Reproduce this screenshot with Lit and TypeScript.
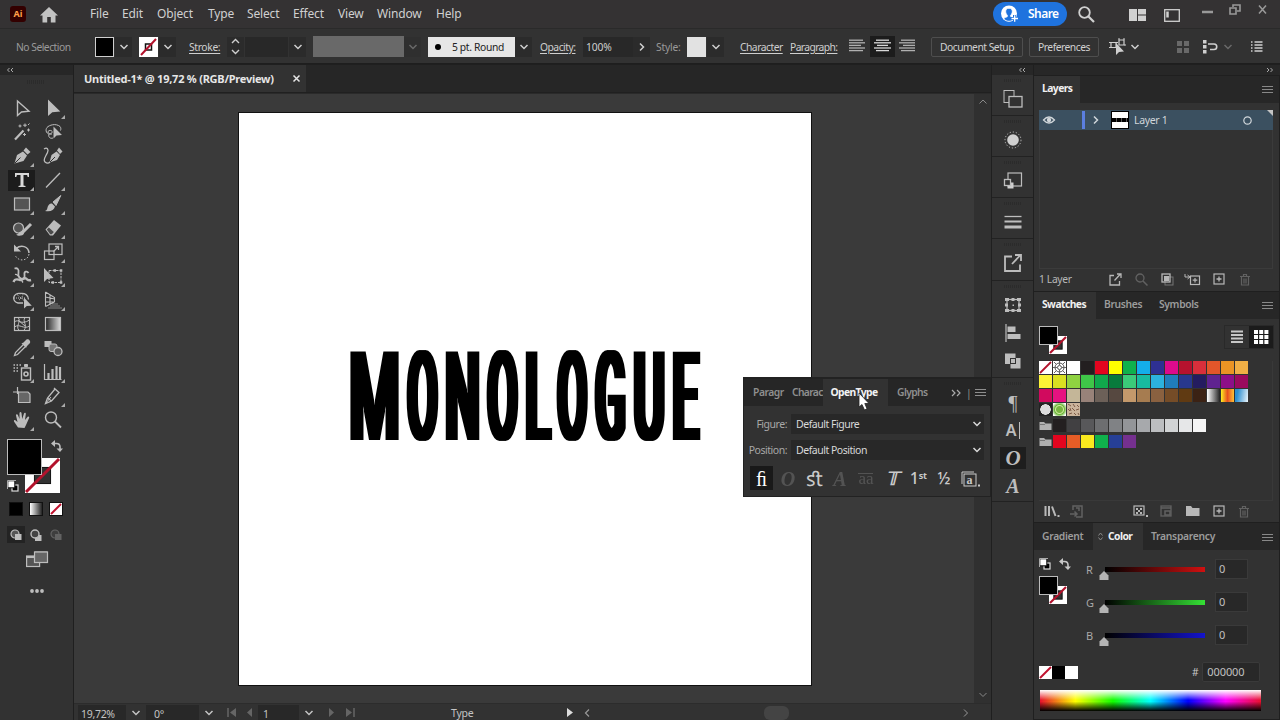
import { LitElement, html, svg, css } from "lit";
import { customElement } from "lit/decorators.js";

const ic = (w: number, h: number, body: unknown) =>
  html`<svg width=${w} height=${h} viewBox="0 0 ${w} ${h}" fill="none" stroke="currentColor">${body}</svg>`;

const chevDown = () => ic(10, 8, svg`<path d="M1.500 2l3.500 3.500L8.500 2" stroke-width="1.500"/>`);
const chevRight = () => ic(8, 10, svg`<path d="M2 1.500l3.500 3.500L2 8.500" stroke-width="1.500"/>`);
const chevLeft = () => ic(8, 10, svg`<path d="M6 1.500L2.500 5L6 8.500" stroke="#999" stroke-width="1.200"/>`);
const dblLeft = () => ic(8, 6, svg`<path d="M3.500 1L1.500 3l2 2M7 1L5 3l2 2"/>`);
const dblRight = () => ic(8, 6, svg`<path d="M1 1l2 2l-2 2M4.500 1l2 2l-2 2"/>`);
const burger = () => ic(11, 9, svg`<path d="M0 1.500h11M0 4.500h11M0 7.500h11"/>`);

const F = "currentColor";

const tools: [unknown, boolean, boolean?][] = [
  [svg`<path d="M5.500 3v14.500l4-3.500l7.500-.8z" stroke-width="1.400"/>`, false],
  [svg`<path d="M5 1.500v16.500l4.300-3.800l8-.8z" fill=${F} stroke="none"/>`, true],
  [svg`<path d="M3 17.500L11.500 8.500" stroke-width="2.200"/><path d="M13 1.500v3.500M11.200 3.200h3.600M16.500 6.500v3M15 8h3M8 2.500v3M6.500 4h3M12.500 11v3M11 12.500h3M16 3l1.500-1.500"/>`, false],
  [svg`<path d="M9 12C3 13 2 8 4 5.500S13 1 17 4.500c1 1 1 3 .5 4M5 9.500c1.500-2 5-1 4 1S5 12 5 9.500M6 12c-1 3 1 5 4 4"/><path d="M10.500 4.500v12l3-3l5.500-.5z" fill=${F} stroke="none"/>`, false],
  [svg`<path d="M2.500 17.500L5 9l6-3.500l4 4L11.500 15z" fill=${F} stroke="none"/><path d="M11.500 4.500l2.500-3l4.500 4.500l-3 2.500z" fill=${F} stroke="none"/><path d="M3 17l5.500-5.500" stroke="#323232"/>`, true],
  [svg`<path d="M6.500 16.500L8.500 9l5-3.500l3.500 3.500l-3 5z" fill=${F} stroke="none"/><path d="M14 4.500l2-3l3.500 4l-2.500 2.500z" fill=${F} stroke="none"/><path d="M7 16l5-5" stroke="#323232"/><path d="M1 3c3-2 5 0 3.500 3.500S-.5 14 2 16s4 1 5 0" stroke-width="1.300"/>`, false],
  [svg`<path d="M3 3h14v4h-1.300l-.6-2h-3.600v10.500l2 .5v1H6.500v-1l2-.5V5H4.900l-.6 2H3z" fill=${F} stroke="none"/>`, true, true],
  [svg`<path d="M3 17.500L17 3" stroke-width="1.300"/>`, true],
  [svg`<rect x="2.500" y="4" width="15" height="12" fill="#555" stroke-width="1.200"/>`, true],
  [svg`<path d="M17.800 1.500L10 8l3 3.500z" fill=${F}/><path d="M9 9.500l3 3c-1 4-4.500 5.500-10 4.500c2.500-1 2-2.500 2.800-4.500C5.800 10 7.500 9.500 9 9.500z" fill=${F} stroke="none"/>`, true],
  [svg`<circle cx="6.500" cy="10" r="5" fill="#555" stroke-width="1.200"/><path d="M19 6L9.500 15.500" stroke-width="3"/><path d="M10 13.500c-3-.5-3 3-6 3c2 2 7 1.500 8-1z" fill=${F} stroke="none"/>`, true],
  [svg`<path d="M2.500 11.500L11 2l7 5.500l-8 10H7z" fill=${F} stroke="none"/><path d="M3.800 11.500l2-2l5 4.500l-2 2.300H7.200z" fill="#4a4a4a" stroke="none"/>`, true],
  [svg`<path d="M4 6.500C9 2.500 16.500 4 17 11" stroke-width="1.500"/><path d="M2 2.500v7h7z" fill=${F} stroke="none"/><path d="M17 12c-1 7-10 8-13.500 2" stroke-dasharray="1.500 1.700"/>`, true],
  [svg`<rect x="1.500" y="9" width="9.500" height="8.500" stroke-width="1.200"/><rect x="6" y="2" width="13" height="10.500" stroke-width="1.200"/><path d="M10.500 9.500l4.500-4.500M12 4.500h3.500V8" stroke-width="1.300"/>`, true],
  [svg`<path d="M2.500 2.500c3-1 4.500 1 4 4s0 5 2.500 6s4-1 3.500-4s2.500-4 4-1.500" stroke-width="1.800"/><path d="M1.500 16c1.500-4 4-2.500 6.500-2s4-3 6-1.500s2 2.500 5 1.500" stroke-width="2.400"/><path d="M3 8.500c3-1 5 4 8 8" stroke-width="1.300"/>`, true],
  [svg`<rect x="6" y="4.500" width="12" height="12" stroke-dasharray="2.500 1"/><path d="M1 2v14l3-3l6.500-1z" fill=${F} stroke="none"/><path d="M10.500 3.200h2.500v2.500h-2.500zM16.800 3.200h2.500v2.500h-2.500zM16.800 15.200h2.500v2.500h-2.500zM8.500 15.200H11v2.500H8.500z" fill=${F} stroke="none"/>`, true],
  [svg`<path d="M11 13H6a5 4.500 0 1 1 2-9.500c5-1 8.500 2 8.500 6" stroke-width="1.300"/><path d="M2 8h12M5 4.500l7 6M7 10c2-1 4-4 4-6" stroke-dasharray="1 1"/><path d="M12 7.500v11l2.800-2.500l5-.3z" fill=${F} stroke="none"/>`, true],
  [svg`<path d="M2.500 2v14.500M2.500 2l9 5.500v4.500M2.500 7l9 2M2.500 12h9M7 5v9M2.500 16.500l9-4.500" stroke-width="1.100"/><path d="M9 14h6M7 16h10M5 18h14" opacity=".6"/>`, true],
  [svg`<rect x="2.500" y="3.500" width="15" height="13" stroke-width="1.200"/><path d="M2.500 8c4-4 6 4 15-2M2.500 13c5-4 9 3 15-1M6 3.500c4 4-3 8 1 13M13 3.500c-3 5 3 7-1 13M6 6l7 6"/>`, false],
  [svg`<defs><linearGradient id="g"><stop stop-color="#222"/><stop offset="1" stop-color="#ddd"/></linearGradient></defs><rect x="2.500" y="3.500" width="15" height="13" fill="url(#g)" stroke-width="1.200"/>`, false],
  [svg`<path d="M11 7L3.500 14.500L2.500 17.500l3-1L13 9" stroke-width="1.300"/><path d="M9.500 5.500l2-1l3-3c2-1 4.500 1.500 3.500 3.500l-3 3l-1 2z" fill=${F} stroke="none"/>`, true],
  [svg`<rect x="1.500" y="3" width="7" height="6" fill=${F} stroke="none"/><rect x="6" y="6" width="8" height="7.500" rx="2" fill="#777"/><circle cx="15" cy="13.500" r="4" fill="#555" stroke-width="1.300"/>`, false],
  [svg`<path d="M1.500 3H3M4.500 3H6M7.500 3H9M1.500 6H3M4.500 6H6M1.500 9H3M4.500 9H6" stroke-width="1.500"/><rect x="9.500" y="6" width="9" height="12" stroke-width="1.400"/><path d="M12.500 2.500h3v2h-3z" fill=${F}/><circle cx="14" cy="12" r="2" stroke-width="1.600"/>`, true],
  [svg`<path d="M1.500 2v15.500h17" stroke-width="1.200"/><path d="M5.500 17v-6M9.500 17V7M13.500 17V4M17 17V5" stroke-width="2.200"/>`, true],
  [svg`<path d="M1 6h6M5.500 1v7" stroke-width="1.200"/><path d="M6.500 6H16l2 2v8.500H6.500z" fill="#666" stroke-width="1.200"/>`, false],
  [svg`<path d="M2.500 17.500l2-5.500L12 3l4 3.500L8.500 15zM4.500 12l4 3M11 2l5.500 5" stroke-width="1.300"/><path d="M3 17l5-6"/>`, true],
  [svg`<path d="M6 17.500L2 11.500c-.5-1.500 1-2 2-.8L5.500 12L4 5.500C4 4 5.500 4 6 5.200L7.500 9V3c.3-1.500 1.700-1.500 2 0l.7 6L12 3.500c.5-1.300 2-.8 1.800.6L13 10l2.500-3c1-1 2.200 0 1.500 1.200L14 15l-1.500 3z" fill=${F} stroke="none"/>`, true],
  [svg`<circle cx="8" cy="7.500" r="5.500" stroke-width="1.400"/><path d="M12 11.500l6 6" stroke-width="1.800"/>`, false],
];

const swatchRows: string[][] = [
  ["none", "reg", "#fff", "#231f20", "#e3051f", "#ffff00", "#0fb14c", "#14aeea", "#2e3092", "#dd0a8c", "#b6122e", "#d92f3b", "#e2562a", "#ea9424", "#f0af45"],
  ["#fcf335", "#d9e021", "#8fd241", "#3fc648", "#10a84c", "#087a3c", "#3bcb79", "#18bba0", "#2cb2dd", "#207dbb", "#28388e", "#241c60", "#5f2390", "#8d0f88", "#9b0a5e"],
  ["#d10a5e", "#e61280", "#c4b698", "#988279", "#6c6058", "#564840", "#c4996b", "#a67c50", "#8a6140", "#754c27", "#603a12", "#3b2214", "wb", "yo", "sky"],
  ["dot", "green", "noise"],
];
const greys = ["#231f20", "#414042", "#58585a", "#6d6e70", "#808285", "#939598", "#a7a9ac", "#bcbec0", "#d1d3d4", "#e6e7e8", "#f5f5f5"];
const brights = ["#e3051f", "#e65d26", "#f9e91e", "#0fb14c", "#263f96", "#75308f"];

const sw = (c: string) =>
  c[0] === "#"
    ? html`<i class="sw" style="background:${c}"></i>`
    : html`<i class="sw ${c}">${
        c === "none" ? ic(13, 13, svg`<path d="M1 12L12 1" stroke="#b3122c" stroke-width="1.800"/>`)
        : c === "reg" ? ic(13, 13, svg`<circle cx="6.500" cy="6.500" r="4.500" stroke="#555"/><circle cx="6.500" cy="6.500" r="2" stroke="#555"/><path d="M6.500 0v4M6.500 9v4M0 6.500h4M9 6.500h4M1 1l2.500 2.500M12 1L9.500 3.500M1 12l2.500-2.500M12 12L9.500 9.500" stroke="#666"/>`)
        : c === "noise" ? ic(13, 13, svg`<path d="M1 1l3 2M6 1l2 3M10 2l2 2M1 6l2 2M5 5l3 3M9 7l3-1M2 11l3-1M7 10l2 2M11 10l1 2M4 8l-1-3" stroke="#7d5b45"/>`)
        : ""
      }</i>`;

const folder = () => ic(13, 13, svg`<path d="M.5 3h4.500l1.500 1.500H12.500V11H.5z" fill="#b0b0b0" stroke="none"/><path d="M1 5.500h5" stroke="#777"/>`);
const trash = () => ic(12, 13, svg`<path d="M1 3.500h10M4.500 3V1.500h3V3M2.500 4v8h7V4M5 5.500v5M7 5.500v5" stroke-width="1.200"/>`);
const plusBox = () => ic(12, 12, svg`<rect x="1" y="1" width="10" height="10" stroke-width="1.200"/><path d="M6 3.500v5M3.500 6h5" stroke-width="1.300"/>`);
const swap = () => ic(12, 12, svg`<path d="M3 3.500h2.500q3.500 0 3.500 3.500v2" stroke-width="1.600"/><path d="M0 3.500L4 0v7zM5.500 8.500h6.500L9 12z" fill="currentColor" stroke="none"/>`);
const defaults = () => ic(12, 12, svg`<rect x="5" y="5" width="6" height="6" fill="#000" stroke="#ddd" stroke-width="1.200"/><rect x=".8" y=".8" width="7" height="7" fill="#fff" stroke="#111"/><path d="M.5 9V.5H9" stroke="#aaa"/>`);
const noStroke = (n: number) => {
  const k = n * 0.27;
  return ic(n, n, svg`<rect x="0" y="0" width=${n} height=${n} fill="#fff" stroke="none"/><rect x=${k} y=${k} width=${n - 2 * k} height=${n - 2 * k} fill="#323232" stroke="#111"/><path d="M1 ${n - 1}L${n - 1} 1" stroke="#b3122c" stroke-width=${n > 25 ? 3 : 2.2}/>`);
};
const para = (xs: number[][], cls = "") =>
  html`<b class="pa ${cls}">${ic(17, 15, xs.map(([a, b], i) => svg`<path d="M${a} ${i * 2.6 + 1.2}H${b}" stroke-width="1.300"/>`))}</b>`;

const dockGroups: [number, unknown[]][] = [
  [41, [svg`<rect x="1" y="1.500" width="10" height="12" /><rect x="6" y="7.500" width="13" height="10.500" fill="#323232" stroke-width="1.300"/>`]],
  [41, [svg`<circle cx="10" cy="10" r="5.800" fill="#d0d0d0" stroke="none"/><circle cx="10" cy="10" r="8" stroke-dasharray="1.300 1.800"/>`]],
  [41, [svg`<rect x="5" y="2" width="13.500" height="13" stroke-width="1.200"/><rect x="4.500" y="11.500" width="6" height="6" fill="#d0d0d0" stroke="none"/><rect x="1.500" y="8.500" width="6" height="6" fill="#323232" stroke-width="1.300"/>`]],
  [41, [svg`<path d="M1.500 4.500h17" stroke-width="1.300"/><path d="M1.500 9.500h17" stroke-width="2"/><path d="M1.500 15h17" stroke-width="3"/>`]],
  [42, [svg`<path d="M9 3.500H2v14.500h15V11.500" stroke-width="1.800"/><path d="M9 11l8.500-9M12 2h6v6" stroke-width="1.800"/>`]],
  [97, [
    svg`<rect x="4" y="4.500" width="12" height="11" stroke-width="1.200"/><path d="M2 3h4v3H2zM14 3h4v3h-4zM2 14h4v3H2zM14 14h4v3h-4zM8.500 3h3v3h-3zM8.500 14h3v3h-3zM2 8.500h3v3H2zM15 8.500h3v3h-3zM9.500 9.500h1.500v1.500H9.500z" fill=${F} stroke="none"/>`,
    svg`<path d="M3 1v18" stroke-width="1.200"/><path d="M4.500 3.500h8v5.500h-8zM4.500 11h13v5h-13z" fill=${F} stroke="none"/>`,
    svg`<path d="M2 2.500h10.500v4.500h5v10.500H7.500V13H2z" fill=${F} stroke="none"/><rect x="7.500" y="7.500" width="5" height="5" stroke="#323232"/>`,
  ]],
  [124, ["¶", "A", "O", "A"]],
];

const WORD_FONT = "500 123.800px Roboto, sans-serif";
const SPREAD = 3;

@customElement("app-root")
export class AppRoot extends LitElement {
  static styles = css`
    :host { display: block; width: 1280px; height: 720px; overflow: hidden; font-family: "Noto Sans", "Open Sans", sans-serif; font-size: 10.3px; letter-spacing: -.5px; color: #c8c8c8; background: #1f1f1f; line-height: 14px; }
    * { box-sizing: border-box; }
    svg { display: block; flex: none; overflow: visible; }
    i, b { font-style: normal; font-weight: 400; display: block; flex: none; }
    .app { display: grid; grid-template-rows: 29px 35px 1fr; height: 720px; }
    .row { display: flex; align-items: center; }
    .ctr { display: flex; align-items: center; justify-content: center; flex: none; }
    .menubar { background: #343233; border-bottom: 1px solid #2a2a2a; color: #d0d0d0; }
    .logo { width: 16px; height: 16px; margin: 0 0 0 10px; border-radius: 3px; background: #330000; color: #ffa04a; font: 700 9px/15px "Noto Sans", sans-serif; text-align: center; letter-spacing: 0; }
    .home { margin: 1px 0 0 14px; color: #c2c2c2; }
    .items { display: grid; grid-template-columns: 32px 35px 51px 39px 46px 45px 39px 59px 60px; margin-left: 32px; font-size: 12px; line-height: 16px; letter-spacing: -.15px; }
    .share { width: 74px; height: 24px; margin-left: 497px; border-radius: 12px; background: #1f73de; color: #fff; font-weight: 600; font-size: 12px; letter-spacing: -.55px; gap: 10px; padding-left: 8px; margin-top: -1px; }
    .ctl { background: #323232; border-bottom: 1px solid #1e1e1e; padding-top: 1px; color: #cfcfcf; }
    .dim { color: #9a9a9a; }
    .ctl u { text-underline-offset: 2px; text-decoration-thickness: 1px; flex: none; white-space: nowrap; }
    .chip { width: 19px; height: 20px; border: 1px solid #cfcfcf; background: #000; }
    .cv { width: 17px; height: 20px; background: #2b2b2b; display: flex; align-items: center; justify-content: center; }
    .field { height: 20px; background: #282828; padding: 3px; white-space: nowrap; }
    .btn { height: 20px; border: 1px solid #4e4e4e; border-radius: 2px; text-align: center; line-height: 19px; color: #d0d0d0; white-space: nowrap; }
    .pa { padding: 3px 4px; width: 25px; height: 21px; color: #b0b0b0; }
    .pa.on { background: #1c1c1c; color: #d8d8d8; }
    .body { display: grid; grid-template-columns: 73px 917px 41px 1fr; column-gap: 1px; padding-top: 1px; min-height: 0; }
    .strip { height: 10px; background: #272727; display: flex; align-items: center; color: #aaa; }
    .toolbar { background: #323232; color: #bdbdbd; display: flex; flex-direction: column; }
    .grip { height: 21px; padding: 5px 0 0 27px; }
    .grip::after { content: ""; display: block; width: 18px; height: 4px; background: repeating-linear-gradient(90deg, #2b2b2b 0 1px, #323232 1px 2px); }
    .tools { display: grid; grid-template-columns: 31px 31px; grid-auto-rows: 24px; padding-left: 6px; }
    .tool { position: relative; display: flex; align-items: center; justify-content: center; }
    .tool.on { background: linear-gradient(#1c1c1c, #1c1c1c) 2px 2px / 27px 21px no-repeat; color: #d8d8d8; }
    .tool.more::after { content: ""; position: absolute; right: 3px; bottom: 1px; border: 2px solid; border-color: transparent #aaa #aaa transparent; }
    .fs { position: relative; height: 62px; margin-top: 6px; }
    .fs > * { position: absolute; }
    .fsA { left: 25px; top: 20px; } .fsB { left: 7px; top: 1px; width: 35px; height: 36px; background: #000; border: 1px solid #bbb; }
    .fsC { left: 51px; top: 2px; } .fsD { left: 7px; top: 42px; }
    .modes { display: grid; grid-template-columns: repeat(3, 20px); justify-items: center; align-items: center; padding-left: 6px; height: 18px; }
    .mode { width: 14px; height: 14px; border: 1px solid #111; background: #000; }
    .dm { width: 18px; height: 17px; padding: 3px; } .dm.cur { background: #232323; }
    .doc { display: grid; grid-template-rows: 28px 1fr 17px; min-width: 0; min-height: 0; }
    .tabs { background: #262626; border-bottom: 1px solid #202020; }
    .tab { width: 232px; height: 27px; background: #323232; display: flex; align-items: center; padding-left: 10px; color: #e6e6e6; font-weight: 700; font-size: 11px; white-space: nowrap; }
    .tab span { width: 209px; letter-spacing: -.24px; }
    .work { display: grid; grid-template-columns: 900px 17px; background: #3a3a3a; border-top: 1px solid #2a2a2a; min-height: 0; }
    .board { margin: 18px 0 0 164px; width: 574px; height: 574px; background: #fff; border: 1px solid #111; padding: 238px 0 0 110px; }
    .vs { background: #303030; display: flex; flex-direction: column; justify-content: space-between; align-items: center; padding: 4px 0 5px; color: #888; }
    .status { background: #323232; display: grid; grid-template-columns: 48px 20px 53px 20px 26px 10px 44px 20px 26px 9px 97px 114px 10px 7px 10px 1fr 10px 20px; align-items: center; justify-items: center; font-size: 10.500px; line-height: 16px; padding-left: 4px; border-top: 1px solid #2c2c2c; color: #c4c4c4; }
    .status > .f { background: #282828; height: 16px; justify-self: stretch; padding-left: 8px; letter-spacing: -.3px; padding-top: 1px; line-height: 16px; }
    .status > .f0 { padding-left: 3px; } .status > .f1 { margin-left: 3px; padding-left: 5px; }
    .status > .t { justify-self: start; line-height: 16px; padding-top: 1px; letter-spacing: -.2px; }
    .thumb { width: 25px; height: 14px; border-radius: 6px; background: #444; margin-left: 172px; justify-self: start; }
    .dock { background: #323232; color: #bdbdbd; }
    .dg { display: flex; flex-direction: column; align-items: center; border-bottom: 1px solid #222; padding: 14px 0 0 1px; gap: 8px; position: relative; }
    .dg::before { content: ""; position: absolute; top: 4px; width: 18px; height: 3px; background: repeating-linear-gradient(90deg, #2b2b2b 0 1px, #323232 1px 2px); }
    .gl { width: 26px; height: 22px; margin-bottom: -2.300px; text-align: center; font: 400 20px/22px "Liberation Serif", serif; letter-spacing: 0; }
    .g1 { font: 600 16px/21px "Noto Sans", sans-serif; }
    .g1::after { content: ""; display: inline-block; width: 1.500px; height: 17px; margin-left: 2px; vertical-align: -3px; background: currentColor; }
    .g2 { background: #1e1e1e; font-style: italic; font-weight: 700; font-size: 21px; }
    .g3 { font-style: italic; font-weight: 700; }
    .side { background: #1f1f1f; display: grid; grid-template-rows: 10px 215px 230px 196px; row-gap: 1px; }
    .panel { background: #323232; border-right: 1px solid #1f1f1f; min-width: 0; }
    .pt { background: #272727; display: flex; height: 27px; color: #9c9c9c; font-weight: 600; line-height: 25px; letter-spacing: -.35px; }
    .pt > span { padding-left: 8px; white-space: nowrap; }
    .pt > .on { background: #323232; color: #f0f0f0; font-weight: 700; letter-spacing: -.55px; }
    .pt > svg { margin: 9px 6px 0 auto; color: #888; }
    .list { margin: 7px 6px 0 5px; height: 159px; box-shadow: inset 0 0 0 1px #3b3b3b; }
    .layer { display: grid; grid-template-columns: 20px 23px 3px 22px 26px 102px 24px 1fr; height: 20px; background: #3b5060; align-items: center; justify-items: center; color: #d0d6da; font-size: 10.500px; }
    .layer > .bar { width: 3px; height: 18px; background: #5b7fe0; }
    .layer > .nm { justify-self: start; padding-left: 1px; letter-spacing: -.35px; line-height: 15px; }
    .mini { width: 18px; height: 18px; background: #fff; border: 1px solid #000; padding-top: 6px; }
    .mini i { height: 4px; background: repeating-linear-gradient(90deg, #000 0 4px, #555 4px 5px); }
    .corner { align-self: start; justify-self: end; border: 3px solid; border-color: #c4c4c4 #c4c4c4 transparent transparent; }
    .foot { display: grid; align-items: center; height: 20px; color: #b8b8b8; }
    .lf { grid-template-columns: 70px 26px 26px 25px 27px 26px 26px 1fr; padding-left: 5px; }
    .off { opacity: .35; }
    .fx { position: relative; width: 30px; height: 30px; }
    .fx > * { position: absolute; left: 10px; top: 10px; } .fx i { left: 0; top: 0; width: 19px; height: 19px; background: #000; border: 1px solid #bbb; }
    .swh { display: flex; justify-content: space-between; padding: 7px 5px 0 5px; height: 42px; }
    .views { display: flex; height: 24px; border: 1px solid #292929; margin-top: -1px; }
    .views > * { width: 24px; display: flex; justify-content: center; align-items: center; } .views > :last-child { background: #1b1b1b; color: #fff; }
    .swl { margin: 0 6px 0 5px; height: 140px; border: 1px solid #393939; border-left: 0; border-top: 0; }
    .sr { display: flex; gap: 1px; height: 14px; } .sg { margin-top: 2px; }
    .sw { width: 13px; height: 13px; background: #fff; }
    .wb { background: linear-gradient(90deg, #fff, #222); } .yo { background: linear-gradient(90deg, #fdee21, #e8501e, #ffc233); }
    .sky { background: linear-gradient(100deg, #2c8fd0 20%, #eef6fb); } .dot { background: radial-gradient(#dcdcdc 5px, #222 5.500px); }
    .green { background: radial-gradient(#79b541 3px, #cfeaa0 4px, #6cb83a 5px, #fff 8px); } .noise { background: #cbb49c; }
    .sf { grid-template-columns: 26px 63px 27px 26px 26px 26px 1fr; padding: 0 0 0 10px; }
    .color { display: grid; grid-template-columns: 46px 1fr; height: 113px; }
    .cl { padding: 8px 0 0 5px; display: flex; flex-direction: column; gap: 6px; }
    .rgb { display: grid; grid-template-rows: repeat(3, 33px); padding-top: 3px; }
    .rg { display: grid; grid-template-columns: 18px 117px 33px; align-items: start; padding-top: 6px; color: #a8a8a8; font-size: 11px; }
    .rg > .ch { padding-top: 4px; padding-left: 6px; }
    .ramp { height: 15px; margin: 8px 10px 0 4px; }
    .ramp > i { height: 5px; margin-left: 3px; } .ramp svg { margin: -1px 0 0 -3px; }
    .r { background: linear-gradient(90deg, #000, #d01010); } .g { background: linear-gradient(90deg, #000, #35e035); } .b { background: linear-gradient(90deg, #000, #1414cc); }
    .num { background: #282828; border: 1px solid #3a3a3a; height: 20px; line-height: 17px; padding-left: 3px; color: #c0c0c0; font-size: 11px; letter-spacing: -.1px; }
    .hex { display: flex; align-items: center; height: 22px; padding-left: 5px; margin-top: -2px; }
    .hex .h { margin-left: 114px; margin-right: 4px; } .hex .num { width: 58px; border-radius: 2px; padding-left: 4px; letter-spacing: -.05px; }
    .spec { height: 21px; width: 221px; margin: 7px 0 0 6px; background: linear-gradient(#fff, #fff0 48%, #0000 55%, #000), linear-gradient(90deg, #e8112d, #ff0 16%, #1f0 33%, #0ff 50%, #00f 67%, #f0f 84%, #e8112d); }
    .float { position: absolute; left: 743px; top: 377px; width: 248px; height: 120px; background: #323232; border: 1px solid #222; border-top-width: 2px; }
    .ft { display: grid; grid-template-columns: 45px 34px 65px 63px 15px 9px 1fr; height: 27px; background: #262626; font-weight: 600; color: #8f8f8f; line-height: 26px; white-space: nowrap; align-items: center; letter-spacing: -.45px; }
    .ft > span { height: 27px; }
    .ft > .p1 { padding-left: 9px; } .ft > .p2 { padding-left: 3px; letter-spacing: -.65px; } .ft > .p3 { background: #323232; color: #f2f2f2; padding-left: 7.500px; font-weight: 700; letter-spacing: -.6px; } .ft > .p4 { padding-left: 9px; letter-spacing: -.6px; }
    .fr { display: grid; grid-template-columns: 43px 193px; column-gap: 4px; height: 20px; margin-bottom: 6px; align-items: center; color: #a8a8a8; letter-spacing: -.48px; font-size: 10.500px; }
    .fr > :first-child { justify-self: end; } .dd { background: #282828; height: 20px; color: #d8d8d8; display: flex; align-items: center; justify-content: space-between; padding: 0 2px 0 5px; }
    .ot { display: grid; grid-template-columns: 30px repeat(8, 26px); margin-left: 1px; height: 25px; font: 20px/26px "Liberation Serif", serif; color: #cacaca; letter-spacing: 0; }
    .ot > * { text-align: center; white-space: nowrap; width: 26px; }
    .ot .act { background: #191919; color: #fff; width: 23px; margin-left: 5px; height: 24px; }
    .ot .bi { font-weight: 700; font-style: italic; } .ot .sans { font: 500 16px/24px "Noto Sans", sans-serif; }
    .ot .off { opacity: .22; } .ot .tt { font-weight: 700; font-size: 18px; }
    .ot .aa { font-size: 17px; background: linear-gradient(#cacaca, #cacaca) 5px 7px / 15px 1px no-repeat; }
    .ot sup { font: 700 9px/9px "Noto Sans", sans-serif; vertical-align: 5px; letter-spacing: -.5px; }
    .cursor { position: absolute; left: 857px; top: 391px; }
    .word { font: 500 123.800px Roboto, sans-serif; letter-spacing: 0; }
  `;

  // Character, left edge and width of its inked box.
  letters: [string, number, number][] = [
    ["M", 350.5, 49], ["O", 407, 32], ["N", 446, 34], ["O", 487, 32], ["L", 526, 27],
    ["O", 557, 31.5], ["G", 595, 31.5], ["U", 634, 31.5], ["E", 673, 28],
  ];

  firstUpdated() {
    // Stretch each condensed letter so that its inked box fills its slot.
    const ctx = document.createElement("canvas").getContext("2d")!;
    ctx.font = WORD_FONT;
    this.renderRoot.querySelectorAll<SVGTextElement>(".word text").forEach((t, i) => {
      const [ch, x, w] = this.letters[i];
      const m = ctx.measureText(ch);
      const s = (w - 2 * SPREAD) / (m.actualBoundingBoxLeft + m.actualBoundingBoxRight);
      t.setAttribute("transform", `translate(${x + SPREAD - 349.5 + m.actualBoundingBoxLeft * s} 89) scale(${s} 1)`);
    });
  }

  render() {
    return html`<div class="app">
      <div class="menubar row">
        <b class="logo">Ai</b><b class="home">${ic(18, 17, svg`<path d="M9 1L0 9.500h2.500V16.500h4.700V11h3.600v5.500h4.700V9.500H18z" fill=${F} stroke="none"/>`)}</b>
        <div class="items">${["File", "Edit", "Object", "Type", "Select", "Effect", "View", "Window", "Help"].map((t) => html`<span>${t}</span>`)}</div>
        <b class="share row">${ic(17, 18, svg`<circle cx="8" cy="8.500" r="8" fill="#fff" stroke="none"/><path d="M8 3.300c4.500 0 3.800 5 1.600 7l.2 1.500c2 .5 3 1 3.500 2.200C10 17 6 17 2.700 14c.5-1.200 1.500-1.700 3.500-2.200l.2-1.500C4.200 8.300 3.500 3.300 8 3.300z" fill="#1f73de" stroke="#fff" stroke-width=".8"/><path d="M10 13.500h7M13.500 10v7" stroke="#1f73de" stroke-width="3"/><path d="M10.500 13.500h6.500M13.700 10.300v6.500" stroke="#fff" stroke-width="1.300"/>`)}Share</b>
        <b style="margin-left:11px">${ic(17, 17, svg`<circle cx="6.500" cy="6.500" r="5.300" stroke-width="1.800"/><path d="M10.500 10.500l5.500 5.500" stroke-width="2.200"/>`)}</b>
        <b style="margin:2px 0 0 34px">${ic(17, 12, svg`<path d="M0 0h8v12H0zM9 0h8v5.500H9zM9 6.500h8V12H9z" fill=${F} stroke="none"/>`)}</b>
        <b style="margin:2px 0 0 18px">${ic(16, 13, svg`<rect x=".7" y=".7" width="14.600" height="11.600" stroke-width="1.300"/><path d="M3.500 2.500v6" stroke-width="2.500"/>`)}</b>
        <b style="margin:-9px 0 0 22px;color:#999">${ic(68, 13, svg`<path d="M0 9h11" stroke-width="2.500"/><path d="M31 4V2h7v6h-3M28 5h6v6h-6z" stroke-width="1.600"/><path d="M57 2.500l7 8M64 2.500l-7 8" stroke-width="1.500"/>`)}</b>
      </div>
      <div class="ctl row">
        <span class="dim" style="width:80px;padding-left:16px;white-space:nowrap">No Selection</span>
        <i class="chip" style="margin-left:15px"></i><i class="cv" style="margin-left:1px">${chevDown()}</i>
        <b style="margin-left:7px">${ic(19, 20, svg`<rect width="19" height="20" fill="#fff" stroke="none"/><rect x="6.500" y="7" width="6" height="6" stroke="#111" stroke-width="1.500"/><path d="M2 18L17 2" stroke="#b3122c" stroke-width="2"/>`)}</b>
        <i class="cv" style="margin-left:1px">${chevDown()}</i>
        <u style="margin-left:13px;width:38px;letter-spacing:-.35px">Stroke:</u>
        <i class="cv">${ic(9, 17, svg`<path d="M1 5l3.500-3.500L8 5M1 12l3.500 3.500L8 12" stroke-width="1.400"/>`)}</i>
        <i class="field" style="width:43px;margin-left:1px"></i><i class="cv" style="margin-left:1px">${chevDown()}</i>
        <i style="width:91px;height:21px;background:#696969;margin-left:7px"></i><i class="cv off">${chevDown()}</i>
        <b class="row" style="margin-left:7px;width:87px;height:20px;background:#e6e6e6;color:#222;padding-left:7px;gap:11px;letter-spacing:-.35px">${ic(6, 6, svg`<circle cx="3" cy="3" r="3" fill="#000" stroke="none"/>`)}5 pt. Round</b>
        <i class="cv">${chevDown()}</i>
        <u style="margin-left:8px;width:43px">Opacity:</u>
        <i class="field" style="width:50px;letter-spacing:-.15px">100%</i><i class="cv">${chevRight()}</i>
        <span class="dim" style="margin-left:6px;width:31px;flex:none;letter-spacing:-.2px">Style:</span>
        <i style="width:19px;height:20px;background:#e2e2e2"></i><i class="cv" style="margin-left:1px">${chevDown()}</i>
        <u style="margin-left:16px;width:50px">Character</u><u style="width:55px;letter-spacing:-.6px">Paragraph:</u>
        ${para([[0, 14], [0, 16], [0, 12], [0, 16], [0, 14]])}${para([[2, 15], [0, 17], [3, 14], [0, 17], [2, 15]], "on")}${para([[2, 16], [0, 16], [4, 16], [0, 16], [2, 16]])}
        <b class="btn" style="margin-left:11px;width:92px">Document Setup</b><b class="btn" style="margin-left:6px;width:70px">Preferences</b>
        <b style="margin-left:10px">${ic(17, 17, svg`<path d="M2 4.500h5v5H2zM10 2h5v5h-5z" stroke-width="1.200"/><path d="M0 4.500h2M7 4.500h2M0 9.500h2M10 0v2M15 0v2M17 7h-2" /><path d="M7 5v12l3-3l5-.5z" fill=${F} stroke="none"/>`)}</b>
        <b style="margin-left:4px">${chevDown()}</b>
        <b class="off" style="margin-left:37px">${ic(12, 12, svg`<path d="M0 0h5v5H0zM7 0h5v5H7zM0 7h5v5H0zM7 7h5v5H7z" fill=${F} stroke="none"/>`)}</b>
        <b style="margin-left:14px">${ic(15, 14, svg`<path d="M0 0h3.500v3.500H0zM0 5h3.500v3.500H0zM0 10h3.500v3.500H0z" fill=${F} stroke="none"/><path d="M5 4h6a2.500 2.500 0 0 1 0 5.500H7" stroke-width="1.600"/>`)}</b>
        <b class="off" style="margin-left:5px">${chevDown()}</b>
        <b style="margin-left:18px">${ic(12, 11, svg`<path d="M0 1h1.500M0 4h1.500M0 7h1.500M0 10h1.500M3.500 1h8M3.500 4h8M3.500 7h8M3.500 10h8" stroke-width="1.300"/>`)}</b>
      </div>
      <div class="body">
        <div class="toolbar">
          <div class="strip" style="padding-left:6px">${dblLeft()}</div><div class="grip"></div>
          <div class="tools">${tools.map(([s, more, on]) => html`<div class="tool ${more ? "more" : ""} ${on ? "on" : ""}">${ic(20, 20, s)}</div>`)}</div>
          <div class="fs"><div class="fsA">${noStroke(35)}</div><div class="fsB"></div><div class="fsC">${swap()}</div><div class="fsD">${defaults()}</div></div>
          <div class="modes"><i class="mode"></i><i class="mode wb"></i><i class="mode">${ic(12, 12, svg`<rect width="12" height="12" fill="#fff" stroke="none"/><path d="M1 11L11 1" stroke="#c1122f" stroke-width="2"/>`)}</i></div>
          <div class="modes" style="margin-top:7px">${[0, 1, 2].map((n) => html`<b class="dm ${n === 2 ? "off" : n === 0 ? "cur" : ""}">${ic(12, 12, n === 1 ? svg`<path d="M5 6h6.500v6H5z" fill=${F} stroke="none"/><circle cx="5" cy="5" r="4" fill="#444" stroke-width="1.400"/>` : svg`<circle cx="5" cy="5" r="4" fill="#555" stroke-width="1.200"/><path d="M5 5h6.500v6H5z" fill=${F} stroke="none"/>`)}</b>`)}</div>
          <div class="ctr" style="margin-top:8px">${ic(22, 16, svg`<rect x=".6" y="5" width="13" height="10.500" fill="#555" stroke-width="1.200"/><path d="M.6 6h13M8.500 1.500h13" stroke-width="2"/><rect x="8.500" y="1" width="13" height="10.500" fill="#666" stroke-width="1.200"/>`)}</div>
          <div class="ctr" style="margin-top:22px">${ic(14, 4, svg`<circle cx="2" cy="2" r="1.900" fill=${F} stroke="none"/><circle cx="7" cy="2" r="1.900" fill=${F} stroke="none"/><circle cx="12" cy="2" r="1.900" fill=${F} stroke="none"/>`)}</div>
        </div>
        <div class="doc">
          <div class="tabs"><div class="tab"><span>Untitled-1* @ 19,72 % (RGB/Preview)</span>${ic(7, 7, svg`<path d="M.5.500l6 6M6.500.500l-6 6" stroke-width="1.500"/>`)}</div></div>
          <div class="work">
            <div class="board"><svg class="word" width="354" height="92" viewBox="0 0 354 92">
              <defs><filter id="spread" filterUnits="userSpaceOnUse" x="-10" y="-10" width="374" height="112"><feMorphology operator="dilate" radius="${SPREAD} 0.001"/></filter></defs>
              <g filter="url(#spread)">${this.letters.map(([c]) => svg`<text x="0" y="0" fill="#000" stroke="none">${c}</text>`)}</g></svg></div>
            <div class="vs">${ic(10, 7, svg`<path d="M1.500 5.500L5 2l3.500 3.500"/>`)}${ic(10, 7, svg`<path d="M1.500 2L5 5.500L8.500 2"/>`)}</div>
          </div>
          <div class="status">
            <b class="f f0">19,72%</b><b>${chevDown()}</b><b class="f">0°</b><b>${chevDown()}</b>
            <b class="off">${ic(10, 9, svg`<path d="M1 0v9" stroke-width="1.500"/><path d="M9 0v9L3 4.500z" fill=${F} stroke="none"/>`)}</b>
            <b class="off">${ic(6, 9, svg`<path d="M5 0v9L0 4.500z" fill=${F} stroke="none"/>`)}</b>
            <b class="f f1">1</b><b>${chevDown()}</b>
            <b class="off">${ic(6, 9, svg`<path d="M0 0v9l5-4.500z" fill=${F} stroke="none"/>`)}</b>
            <b class="off">${ic(10, 9, svg`<path d="M9 0v9" stroke-width="1.500"/><path d="M1 0v9l6-4.500z" fill=${F} stroke="none"/>`)}</b>
            <b></b><b class="t">Type</b><b>${ic(6, 9, svg`<path d="M0 0v9l6-4.500z" fill="#ddd" stroke="none"/>`)}</b>
            <b></b><b>${chevLeft()}</b><b class="thumb"></b><b>${ic(8, 10, svg`<path d="M2 1.500l3.500 3.500L2 8.500" stroke="#999"/>`)}</b><b></b>
          </div>
        </div>
        <div class="dock">
          <div class="strip" style="padding-left:26px">${dblLeft()}</div>
          ${dockGroups.map(([h, xs]) => html`<div class="dg" style="height:${h}px">${xs.map((x, i) => typeof x === "string" ? html`<span class="gl g${i}">${x}</span>` : ic(20, 20, x))}</div>`)}
        </div>
        <div class="side">
          <div class="strip" style="padding-left:232px">${dblRight()}</div>
          <div class="panel">
            <div class="pt"><span class="on" style="width:46px">Layers</span>${burger()}</div>
            <div class="list"><div class="layer">
              ${ic(12, 8, svg`<path d="M.5 4Q6-2 11.500 4Q6 10 .5 4z" stroke-width="1.300"/><circle cx="6" cy="4" r="2.200" fill=${F} stroke="none"/>`)}<i></i><i class="bar"></i>${chevRight()}<i class="mini"><i></i></i><span class="nm">Layer 1</span>${ic(9, 9, svg`<circle cx="4.500" cy="4.500" r="3.700" stroke-width="1.200"/>`)}<i class="corner"></i>
            </div></div>
            <div class="foot lf"><span style="letter-spacing:-.35px">1 Layer</span>
              ${ic(13, 13, svg`<path d="M5 2.500H1v9.500h9.500V8" stroke-width="1.300"/><path d="M5.500 7.500L11.500 1M8 1h4v4" stroke-width="1.300"/>`)}
              <b class="off">${ic(13, 13, svg`<circle cx="5" cy="5" r="4" stroke-width="1.300"/><path d="M8 8l4.500 4.500" stroke-width="1.500"/>`)}</b>
              ${ic(13, 13, svg`<rect x="1" y="1" width="8" height="8" stroke-width="1.300"/><rect x="4" y="4" width="8" height="8" opacity=".5"/><path d="M3 3h5v5H3z" fill=${F} stroke="none"/>`)}
              <b style="margin-left:-2px">${ic(16, 13, svg`<path d="M1 1v3h4M3.500 2L6 4L3.500 6"/><rect x="6.500" y="3" width="9" height="8.500" stroke-width="1.200"/><path d="M11 5v4.500M8.700 7.200h4.600" stroke-width="1.200"/>`)}</b>
              <b>${plusBox()}</b><b class="off">${trash()}</b></div>
          </div>
          <div class="panel">
            <div class="pt"><span class="on" style="width:62px">Swatches</span><span style="width:55px">Brushes</span><span>Symbols</span>${burger()}</div>
            <div class="swh"><div class="fx">${noStroke(18)}<i></i></div>
              <div class="views"><b>${ic(12, 14, svg`<path d="M0 1.500h12M0 5h12M0 8.500h12M0 12h12" stroke-width="1.800"/>`)}</b><b>${ic(15, 14, svg`<path d="M0 0h4v4H0zM5.200 0h4v4h-4zM10.400 0h4v4h-4zM0 5h4v4H0zM5.200 5h4v4h-4zM10.400 5h4v4h-4zM0 10h4v4H0zM5.200 10h4v4h-4zM10.400 10h4v4h-4z" fill="#fff" stroke="none"/>`)}</b></div></div>
            <div class="swl">${swatchRows.map((r) => html`<div class="sr">${r.map(sw)}</div>`)}
              <div class="sr sg">${folder()}${greys.map(sw)}</div><div class="sr sg">${folder()}${brights.map(sw)}</div></div>
            <div class="foot sf">
              ${ic(16, 12, svg`<path d="M1.500 1v10M5 1v10M8 1.500l3.500 9.500" stroke-width="2"/><path d="M13.500 10h2v2h-2z" fill=${F} stroke="none"/>`)}
              <b class="off">${ic(13, 13, svg`<path d="M3 5V1h9v11H6" stroke-width="1.500"/><path d="M0 9h7M4.500 6.500L7 9l-2.500 2.500M6 3h3v3" stroke-width="1.500"/>`)}</b>
              ${ic(16, 12, svg`<rect x="1" y="1" width="10" height="9" stroke-width="1.200"/><path d="M3 3h2v2H3zM7 3h2v2H7zM5 5h2v2H5zM3 7h2v2H3zM7 7h2v2H7z" fill=${F} stroke="none"/><path d="M13 10h2v2h-2z" fill=${F} stroke="none"/>`)}
              <b class="off">${ic(12, 12, svg`<rect x="1" y="1" width="10" height="10" stroke-width="1.300"/><path d="M1 3h10M5 6h5v4H5z" stroke-width="1.500"/>`)}</b>
              ${ic(14, 12, svg`<path d="M0 1h5l1.500 2H13.500V11H0z" fill=${F} stroke="none"/>`)}<b style="padding-left:1px">${plusBox()}</b><b class="off">${trash()}</b></div>
          </div>
          <div class="panel">
            <div class="pt" style="line-height:26px"><span style="width:59px;letter-spacing:-.3px">Gradient</span><span class="on" style="width:50px;padding-left:5px;display:flex;gap:5px"><b style="padding-top:9px;width:5px">${ic(5, 9, svg`<path d="M.5 3.500l2-2.500l2 2.500M.5 5.500l2 2.500l2-2.500" stroke="#888"/>`)}</b>Color</span><span style="letter-spacing:-.28px">Transparency</span><svg width="11" height="9" viewBox="0 0 11 9" fill="none" stroke="currentColor" style="margin-top:10px"><path d="M0 1.500h11M0 4.500h11M0 7.500h11"/></svg></div>
            <div class="color">
              <div class="cl"><div class="row" style="gap:8px">${defaults()}${swap()}</div><div class="fx">${noStroke(18)}<i></i></div></div>
              <div class="rgb">${["R", "G", "B"].map((c) => html`<div class="rg"><b class="ch">${c}</b><div class="ramp"><i class=${c.toLowerCase()}></i>${ic(10, 9, svg`<path d="M5 0l4.500 4.500V9H.5V4.500z" fill="#b4b4b4" stroke="none"/>`)}</div><b class="num">0</b></div>`)}</div>
            </div>
            <div class="hex"><i class="sw none">${ic(13, 13, svg`<path d="M1 12L12 1" stroke="#c1122f" stroke-width="2"/>`)}</i><i class="sw" style="background:#000"></i><i class="sw"></i><b class="h">#</b><b class="num">000000</b></div>
            <div class="spec"></div>
          </div>
        </div>
      </div>
      <div class="float">
        <div class="ft"><span class="p1">Paragr</span><span class="p2">Charac</span><span class="p3">OpenType</span><span class="p4">Glyphs</span>${ic(10, 8, svg`<path d="M1 1l3 3l-3 3M6 1l3 3l-3 3" stroke="#aaa" stroke-width="1.200"/>`)}<b>|</b><b>${burger()}</b></div>
        <div class="fr" style="margin-top:8px"><span>Figure:</span><b class="dd">Default Figure${chevDown()}</b></div>
        <div class="fr"><span>Position:</span><b class="dd">Default Position${chevDown()}</b></div>
        <div class="ot"><b class="act">ﬁ</b><b class="off bi">O</b><b>ﬆ</b><b class="off bi">A</b><b class="off aa">aa</b><b class="bi tt">𝕋</b><b class="sans">1<sup>st</sup></b><b class="sans">½</b><b class="ctr">${ic(19, 17, svg`<path d="M1 13V1h12" /><rect x="3" y="3" width="12" height="12"/><text x="5.500" y="13" font-size="12" font-family="Liberation Serif" font-weight="700" fill=${F} stroke="none">a</text><path d="M17 13.500h2v2h-2z" fill=${F} stroke="none"/>`)}</b></div>
      </div>
      <svg class="cursor" width="14" height="20" viewBox="0 0 14 20"><path d="M2 2v14l3-2.500L7.500 19l2.500-1.200L7.800 12.500H12z" fill="#fff" stroke="#222" stroke-width=".8"/></svg>
    </div>`;
  }
}
